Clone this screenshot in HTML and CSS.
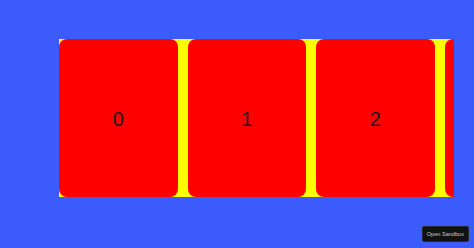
FILE: index.html
```html
<!DOCTYPE html>
<html>
<head>
<meta charset="utf-8">
<link rel="stylesheet" href="styles.css">
</head>
<body>
<div class="stage">
  <div class="viewport">
    <div class="track">
      <div class="slide">0</div>
      <div class="slide">1</div>
      <div class="slide">2</div>
      <div class="slide"></div>
    </div>
  </div>
</div>
<a class="sandbox-btn">Open Sandbox</a>
</body>
</html>
```
FILE: styles.css
```css
html, body {
  margin: 0;
  padding: 0;
  height: 100%;
}
body {
  background: #3b5bfd;
  font-family: "Liberation Sans", Arial, sans-serif;
  overflow: hidden;
}
.stage {
  padding: 39px 0 0 59px;
}
.viewport {
  width: 395px;
  height: 158px;
  overflow: hidden;
  background: #ffff00;
}
.track {
  display: flex;
  gap: 10px;
  height: 100%;
}
.slide {
  flex: 0 0 118.5px;
  height: 100%;
  background: #ff0000;
  border-radius: 8px;
  display: flex;
  align-items: center;
  justify-content: center;
  font-size: 20px;
  padding-top: 2px;
  box-sizing: border-box;
  color: #1a1a1a;
}
.sandbox-btn {
  position: absolute;
  right: 5px;
  bottom: 6px;
  background: #111;
  color: #ccc;
  font-size: 5.6px;
  padding: 4px 4px;
  border-radius: 2px;
  border: 1px solid #2a2a2a;
}
```
